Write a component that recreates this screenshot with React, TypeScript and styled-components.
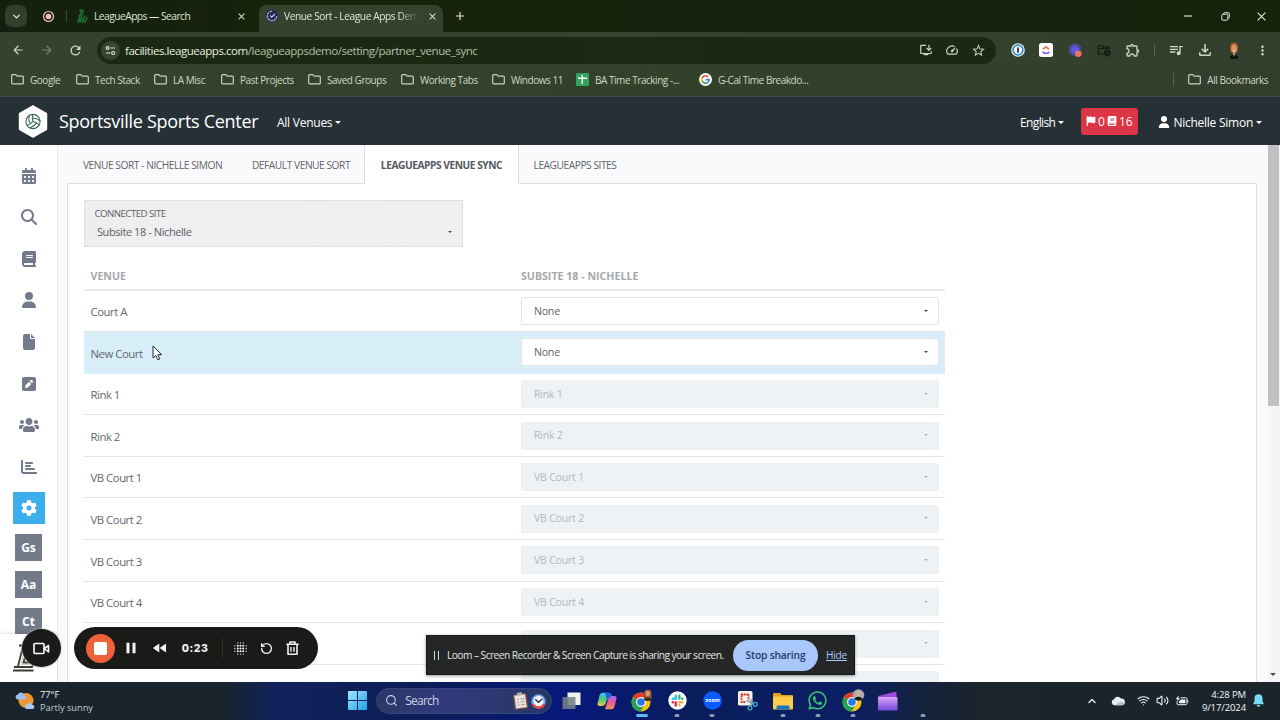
import React from 'react';
import styled, { createGlobalStyle, css } from 'styled-components';
import { FaCalendarDays, FaMagnifyingGlass, FaBook, FaUser, FaFile, FaSquarePen, FaChartBar, FaGear, FaFlag, FaWhatsapp } from 'react-icons/fa6';
import { FaUsers } from 'react-icons/fa';
import { MdArrowBack, MdArrowForward, MdRefresh, MdInstallDesktop, MdOutlineSpeed, MdStarBorder, MdOutlineExtension, MdQueueMusic, MdOutlineFileDownload, MdMoreVert, MdClose, MdAdd, MdFastRewind, MdPause } from 'react-icons/md';
import { Volleyball, Volume2, Wifi, ChevronUp, ChevronDown, Search, RotateCcw } from 'lucide-react';

const GlobalStyle = createGlobalStyle`
  * { box-sizing: border-box; }
  body { margin: 0; overflow: hidden; background: #fff; font-family: "Open Sans", "Noto Sans", sans-serif; }
  svg { display: block; flex: none; }
`;

const Screen = styled.div`
  position: relative;
  width: 1280px;
  height: 720px;
  display: flex;
  flex-direction: column;
  overflow: hidden;
`;

/* ---------- Browser chrome ---------- */

const TabStrip = styled.div`
  height: 32px;
  display: flex;
  align-items: center;
  background: linear-gradient(90deg, #14200f, #172409 30%, #16230e 60%, #15230b);
  color: #dfe5d8;
  font-size: 10.2px;
`;

const TabSearch = styled.div`
  width: 22px;
  height: 22px;
  margin-left: 5px;
  border-radius: 7px;
  background: #30402a;
  display: grid;
  place-items: center;
`;

const PinnedTab = styled.div`
  width: 39px;
  display: flex;
  justify-content: center;
  padding-left: 3px;
`;

const TabDivider = styled.div`
  width: 1px;
  height: 12px;
  background: #3a4a33;
`;

const BrowserTab = styled.div<{ $active?: boolean }>`
  height: 27px;
  align-self: flex-end;
  display: flex;
  align-items: center;
  ${({ $active }) =>
    $active
      ? css`
          width: 184px;
          padding: 0 5px 5px 7px;
          background: #34432d;
          border-radius: 8px 8px 0 0;
        `
      : css`
          width: 192px;
          padding: 0 12px 5px 9px;
        `}
`;

const TabTitle = styled.span<{ $fade?: boolean }>`
  flex: 1;
  margin-left: 6px;
  overflow: hidden;
  white-space: nowrap;
  letter-spacing: -0.5px;
  ${({ $fade }) => $fade && css`mask-image: linear-gradient(90deg, #000 85%, transparent); margin-right: 8px; letter-spacing: -0.42px;`}
`;

const NewTab = styled.div`
  margin-left: 10px;
`;

const WindowControls = styled.div`
  margin-left: auto;
  width: 110px;
  display: flex;
  & > div { width: 36.8px; display: grid; place-items: center; }
`;

const Toolbar = styled.div`
  height: 33px;
  display: flex;
  align-items: center;
  padding-top: 3px;
  background: linear-gradient(90deg, #34432d, #34432c 50%, #323f2d);
  color: #cdd6c5;
`;

const Slot = styled.div<{ $w: number; $dim?: boolean }>`
  width: ${({ $w }) => $w}px;
  flex: none;
  display: grid;
  place-items: center;
  opacity: ${({ $dim }) => ($dim ? 0.45 : 1)};
`;

const AddressBar = styled.div`
  width: 899px;
  height: 27px;
  margin-left: 5px;
  border-radius: 14px;
  background: linear-gradient(90deg, #1b2812, #1b2a13 60%, #1b2914);
  display: flex;
  align-items: center;
  padding: 0 5px 0 4px;
`;

const SiteInfo = styled.div`
  width: 19px;
  height: 19px;
  border-radius: 50%;
  background: #36452f;
  display: grid;
  place-items: center;
`;

const Url = styled.div`
  flex: 1;
  margin-left: 5px;
  font-size: 11.5px;
  letter-spacing: -0.45px;
  color: #b3bfa9;
  b { font-weight: 400; color: #e8eee2; }
`;

const Extensions = styled.div`
  display: flex;
  align-items: center;
  padding-left: 7.5px;
`;

const ToolDivider = styled.div`
  width: 1px;
  height: 12px;
  margin: 0 7px 0 6px;
  background: #56654d;
`;

const Bookmarks = styled.div`
  height: 32px;
  display: flex;
  align-items: center;
  padding: 0 12px 2px 11px;
  background: linear-gradient(90deg, #34432d, #33412b 55%, #333f2d);
  border-bottom: 1px solid #3e4c43;
  font-size: 10px;
  letter-spacing: -0.46px;
  color: #cfd7c8;
`;

const Bookmark = styled.div<{ $w: number }>`
  width: ${({ $w }) => $w}px;
  flex: none;
  display: flex;
  align-items: center;
  gap: 6px;
  white-space: nowrap;
`;

const AllBookmarks = styled.div`
  margin-left: auto;
  padding-left: 14px;
  border-left: 1px solid #56654d;
  height: 13px;
  display: flex;
  align-items: center;
  gap: 6px;
  white-space: nowrap;
`;

/* ---------- Application ---------- */

const AppHeader = styled.header`
  height: 48px;
  flex: none;
  display: flex;
  align-items: center;
  padding: 0 18px;
  background: #263137;
  color: #fff;
`;

const Brand = styled.div`
  width: 218px;
  margin-left: 11px;
  font-size: 18px;
  letter-spacing: -0.29px;
  white-space: nowrap;
`;

const HeaderMenu = styled.div`
  display: flex;
  align-items: center;
  gap: 3px;
  padding-top: 2px;
  font-size: 12px;
  letter-spacing: -0.25px;
  white-space: nowrap;
`;

const LanguageMenu = styled(HeaderMenu)`
  letter-spacing: -0.6px;
`;

const Caret = styled.i<{ $c?: string; $s?: number }>`
  width: 0;
  height: 0;
  border: ${({ $s = 3 }) => $s}px solid transparent;
  border-top-color: ${({ $c = '#fff' }) => $c};
  border-bottom: 0;
`;

const Account = styled.div`
  margin-left: auto;
  display: flex;
  align-items: center;
`;

const Alerts = styled.div`
  width: 57px;
  height: 27px;
  margin: 0 20px 0 17px;
  padding-right: 1px;
  border-radius: 3px;
  background: #dc3546;
  display: flex;
  align-items: center;
  justify-content: center;
  gap: 2px;
  font-size: 12px;
`;

const Body = styled.div`
  height: 536.5px;
  flex: none;
  display: flex;
  overflow: hidden;
  background: #fafafc;
`;

const Sidebar = styled.nav`
  width: 58px;
  flex: none;
  display: flex;
  flex-direction: column;
  align-items: center;
  padding-top: 14.6px;
  background: #fff;
  border-right: 1px solid #e9e9ec;
  color: #737a8b;
`;

const NavItem = styled.div<{ $active?: boolean }>`
  width: 32px;
  height: 32px;
  margin-bottom: 9.6px;
  flex: none;
  display: grid;
  place-items: center;
  ${({ $active }) => $active && css`background: #3daeed; color: #fff;`}
`;

const NavBadge = styled.div`
  width: 27px;
  height: 27px;
  margin-bottom: 10px;
  flex: none;
  display: grid;
  place-items: center;
  background: #737b8b;
  color: #fff;
  font-size: 12px;
  font-weight: 700;
`;

const Main = styled.main`
  flex: 1;
  display: flex;
  flex-direction: column;
  padding: 0 11px 0 9px;
`;

const PageTabs = styled.div`
  height: 39px;
  flex: none;
  display: flex;
  margin-bottom: -1px;
`;

const PageTab = styled.div<{ $w: number; $active?: boolean }>`
  position: relative;
  width: ${({ $w }) => $w}px;
  padding-top: 12px;
  text-align: center;
  white-space: nowrap;
  font-size: 10.2px;
  line-height: 16px;
  letter-spacing: -0.45px;
  color: #62656a;
  ${({ $active }) =>
    $active &&
    css`
      font-weight: 700;
      color: #55585c;
      background: #fff;
      border: solid #dedee2;
      border-width: 0 1px;
    `}
`;

const Panel = styled.section`
  flex: 1;
  padding: 16px;
  background: #fff;
  border: 1px solid #dedfe2;
  border-bottom: 0;
`;

const SiteSelect = styled.div`
  width: 379px;
  height: 47px;
  padding: 5px 10px;
  background: linear-gradient(90deg, #efeeef, #efeef1 50%, #f0f0ee);
  border: 1px solid #dedfe3;
  color: #5c5f64;
`;

const SiteLabel = styled.div`
  font-size: 9.7px;
  line-height: 16px;
  letter-spacing: -0.55px;
  font-weight: 500;
  margin-left: -0.5px;
`;

const SiteValue = styled.div`
  display: flex;
  align-items: center;
  justify-content: space-between;
  padding-left: 2px;
  font-size: 11px;
  line-height: 20px;
  letter-spacing: -0.42px;
`;

const Table = styled.div`
  width: 861px;
  margin-top: 16px;
`;

const HeadRow = styled.div`
  height: 27.5px;
  display: grid;
  grid-template-columns: 430.5px 1fr;
  align-items: center;
  padding-left: 6.5px;
  border-bottom: 2px solid #e9eaeb;
  color: #a5a7a9;
  font-size: 10.6px;
  font-weight: 700;
  letter-spacing: 0.02px;
`;

const Row = styled.div<{ $hover?: boolean }>`
  height: 41.6px;
  display: grid;
  grid-template-columns: 430.5px 417.5px;
  align-items: center;
  padding-left: 6.5px;
  border-bottom: 1px solid ${({ $hover }) => ($hover ? '#d8eef9' : '#e4e5e6')};
  background: ${({ $hover }) => ($hover ? '#d8eef9' : 'transparent')};
  font-size: 11.4px;
  letter-spacing: -0.5px;
  color: #66696d;
`;

const VenueName = styled.span`
  padding-top: 1.6px;
`;

const VenueSelect = styled.div<{ $disabled?: boolean }>`
  height: 28px;
  display: flex;
  align-items: center;
  justify-content: space-between;
  padding: 0 9.5px 0.6px 12px;
  border: 1px solid ${({ $disabled }) => ($disabled ? '#edf0f1' : '#e3e4e6')};
  border-radius: 2px;
  background: ${({ $disabled }) => ($disabled ? '#eef2f4' : '#fff')};
  color: ${({ $disabled }) => ($disabled ? '#b3b9bd' : '#606367')};
  font-size: 10.6px;
  letter-spacing: -0.24px;
`;

const Scrollbar = styled.div`
  width: 12px;
  display: flex;
  flex-direction: column;
  justify-content: space-between;
  padding-bottom: 6px;
  background: #f5f5f8;
`;

const Thumb = styled.div`
  width: 11px;
  height: 261px;
  background: #c1c1c3;
`;

const ScrollDown = styled.div`
  display: flex;
  padding-left: 2px;
`;

/* ---------- Windows taskbar ---------- */

const Taskbar = styled.footer`
  flex: 1;
  display: flex;
  align-items: center;
  background: linear-gradient(90deg, #1a242c 0, #1a242c 225px, #10235a 275px, #0d1e57 420px, #06187a 560px, #0a1d5c 700px, #0b1f63 850px, #14223e 920px, #1b252c 980px, #1b242a);
  color: #f2f5f7;
`;

const Weather = styled.div`
  width: 340px;
  display: flex;
  align-items: center;
  gap: 5px;
  padding-left: 15px;
  font-size: 9.3px;
  line-height: 13px;
  letter-spacing: -0.05px;
  div > div:last-child { color: #c6ced3; }
`;

const SearchBox = styled.div`
  width: 176px;
  height: 26px;
  margin: 0 1px;
  padding: 0 4px 0 8px;
  border-radius: 13px;
  background: linear-gradient(90deg, #2a3868, #313a7c 40%, #263766);
  border: 1px solid #36457a;
  display: flex;
  align-items: center;
  font-size: 12px;
  color: #cdd4e4;
  span { flex: 1; margin-left: 7px; letter-spacing: -0.75px; }
`;

const TaskIcon = styled.div<{ $mark?: 'dot' | 'bar' }>`
  position: relative;
  width: 35.2px;
  height: 38px;
  display: grid;
  place-items: center;
  &::after {
    content: '';
    position: absolute;
    bottom: 3px;
    left: 50%;
    transform: translateX(-50%);
    height: 2.5px;
    border-radius: 2px;
    width: ${({ $mark }) => ($mark === 'bar' ? 12 : $mark ? 5 : 0)}px;
    background: ${({ $mark }) => ($mark === 'bar' ? '#5cb8f3' : '#8e9bb5')};
  }
`;

const TaskIcons = styled.div`
  display: flex;
  padding-left: 0.7px;
`;

const Tray = styled.div`
  margin-left: auto;
  display: flex;
  align-items: center;
  padding-right: 16px;
`;

const Clock = styled.div`
  width: 52px;
  text-align: right;
  font-size: 9.5px;
  line-height: 13px;
  letter-spacing: -0.1px;
  margin-right: 7px;
`;

/* ---------- Floating recorder parts ---------- */

const CornerCard = styled.div`
  position: absolute;
  left: 0;
  top: 634px;
  width: 57px;
  height: 47.5px;
  background: #fff;
  box-shadow: 0 -1px 3px rgba(0, 0, 0, 0.12);
  display: flex;
  align-items: center;
  padding: 1px 0 0 13px;
`;

const CameraButton = styled.div`
  position: absolute;
  left: 22px;
  top: 629px;
  width: 39px;
  height: 38px;
  border-radius: 50%;
  background: #1b1b1a;
  box-shadow: 0 0 0 1px rgba(190, 190, 190, 0.5);
  display: grid;
  place-items: center;
`;

const Recorder = styled.div`
  position: absolute;
  left: 74px;
  top: 627px;
  width: 244px;
  height: 42px;
  border-radius: 21px;
  background: #1a1b18;
  color: #f2f2f0;
  display: flex;
  align-items: center;
  padding-left: 12px;
`;

const StopButton = styled.div`
  width: 29px;
  height: 29px;
  border-radius: 50%;
  background: #ee6239;
  display: grid;
  place-items: center;
  &::after { content: ''; width: 13px; height: 13px; border-radius: 2px; background: #fff; }
`;

const Timer = styled.div`
  width: 38px;
  margin-left: 4px;
  text-align: center;
  font: 800 10.5px Inter, sans-serif;
  letter-spacing: 0.5px;
`;

const RecorderDivider = styled.div`
  width: 1px;
  height: 20px;
  margin-left: 8px;
  background: #30302d;
`;

const ShareBar = styled.div`
  position: absolute;
  left: 426px;
  top: 635px;
  width: 429px;
  height: 40px;
  display: flex;
  align-items: center;
  padding-left: 7px;
  background: #252626;
  border: 1px solid #171818;
  box-shadow: 0 1px 3px rgba(0, 0, 0, 0.4);
  color: #e4e5e6;
  font-size: 10.2px;
  white-space: nowrap;
`;

const PauseMark = styled.i`
  width: 5px;
  height: 9px;
  border: solid #d5d6d7;
  border-width: 0 1.5px;
`;

const ShareText = styled.span`
  width: 286px;
  margin-left: 8px;
  letter-spacing: -0.54px;
`;

const StopSharing = styled.button`
  width: 85px;
  height: 31px;
  padding: 0;
  border: 0;
  border-radius: 16px;
  background: #a8c7fa;
  color: #1f3a68;
  font: 600 10.3px "Open Sans", sans-serif;
  letter-spacing: -0.2px;
`;

const HideLink = styled.a`
  margin-left: 8px;
  color: #a8c7fa;
  text-decoration: underline;
  letter-spacing: -0.3px;
`;

const Pointer = styled.svg`
  position: absolute;
  left: 152px;
  top: 345px;
`;

/* ---------- Drawings ---------- */

const Folder = () => (
  <svg width="13" height="11" viewBox="0 0 13 11" fill="none" stroke="#c8d2bf" strokeWidth="1.2">
    <path d="M.7 1.6a.9.9 0 0 1 .9-.9h3.2l1.4 1.5h5.2a.9.9 0 0 1 .9.9v5.9a.9.9 0 0 1-.9.9H1.6a.9.9 0 0 1-.9-.9z" />
  </svg>
);

const RecordIcon = () => (
  <svg width="13" height="13" viewBox="0 0 13 13"><circle cx="6.5" cy="6.5" r="5" fill="none" stroke="#f0c3bb" strokeWidth="1.2" /><circle cx="6.5" cy="6.5" r="2.8" fill="#f7bdb2" /></svg>
);

const LeagueMark = () => (
  <svg width="12" height="14" viewBox="0 0 12 14" fill="none" stroke="#1d7a35" strokeWidth="1.3">
    <path d="M3 1.2h4.5M5.3 1.5 2.6 10.5M7.4 1.5 4.9 9.2h3l1.2-2.6M.8 12.9h8.6l1.9-5M1.5 11h7.2" />
  </svg>
);

const CornerMark = () => (
  <svg width="24" height="28" viewBox="0 0 24 28" fill="none">
    <path d="M6 1.5h9M10 2 5 22.5M15 2l-4.500 16.500h6l3-5M1 23h18l3.500-9" stroke="#3c3b36" strokeWidth="1.8" />
    <path d="M7.500 3.500h2M12.500 3 8 20.500h10.500" stroke="#d8cdb6" strokeWidth="1" />
    <path d="M0 26.500h20.500" stroke="#3c3b36" strokeWidth="2" />
  </svg>
);

const CheckFavicon = () => (
  <svg width="12" height="12" viewBox="0 0 12 12" fill="none"><circle cx="6" cy="6" r="6" fill="#252a52" /><path d="M6 1.3A4.7 4.7 0 1 0 10.7 6" stroke="#b9bee6" strokeWidth="1.1" strokeDasharray="2.6 .6" /><path d="m4.2 5.6 1.6 1.6 3-3.2" stroke="#ccd0f2" strokeWidth="1.1" /></svg>
);

const TuneIcon = () => (
  <svg width="11" height="11" viewBox="0 0 11 11" fill="none" stroke="#dbe3d4" strokeWidth="1.2"><circle cx="2.6" cy="3" r="1.4" /><path d="M5.4 3H10M1 8h4.4" /><circle cx="8.2" cy="8" r="1.5" /></svg>
);

const SheetsIcon = () => (
  <svg width="13" height="13" viewBox="0 0 13 13"><rect width="13" height="13" rx="1" fill="#31a45c" /><path d="M6.2 2v9M2 5.3h9" stroke="#fff" strokeWidth="1.4" /></svg>
);

const GoogleIcon = () => (
  <svg width="13" height="13" viewBox="0 0 13 13" fill="none" strokeWidth="1.7"><circle cx="6.5" cy="6.5" r="6.5" fill="#fff" /><path d="M9.3 4A3.7 3.7 0 0 0 3.2 4.8" stroke="#ea4335" /><path d="M3.2 4.8a3.7 3.7 0 0 0 0 3.4" stroke="#fbbc05" /><path d="M3.2 8.2a3.7 3.7 0 0 0 5.6 1.2" stroke="#34a853" /><path d="M8.8 9.4a3.7 3.7 0 0 0 1.4-2.8H6.6" stroke="#4285f4" /></svg>
);

const OnePassword = () => (
  <svg width="14" height="14" viewBox="0 0 14 14"><circle cx="7" cy="7" r="6.8" fill="#eef4fa" /><circle cx="7" cy="7" r="4.9" fill="none" stroke="#2d7fc6" strokeWidth="1.5" /><rect x="6.1" y="4.2" width="1.8" height="5.6" rx=".6" fill="#1a3854" /></svg>
);

const ClickUp = () => (
  <svg width="14" height="14" viewBox="0 0 14 14" fill="none"><rect width="14" height="14" rx="2.5" fill="#fff" /><path d="M4 6.2 7 3.8l3 2.4" stroke="#e8784f" strokeWidth="1.8" /><path d="M3.6 8.8c2 2.2 4.8 2.2 6.8 0" stroke="#8a63ee" strokeWidth="1.8" /></svg>
);

const LoomIcon = () => (
  <svg width="15" height="15" viewBox="0 0 15 15"><g stroke="#5d59e8" strokeWidth="1.1" strokeLinecap="round"><path d="M7 .8v12M1 6.800h12M2.800 2.600l8.400 8.400M11.200 2.600 2.800 11M4.700 1.300l4.600 11M9.300 1.300l-4.600 11M1.500 4.500l11 4.600M12.500 4.500l-11 4.600" /></g><circle cx="7" cy="6.8" r="3" fill="#5d59e8" /><circle cx="10.3" cy="10.7" r="3.3" fill="#f0715f" /></svg>
);

const FolderClock = () => (
  <svg width="14" height="13" viewBox="0 0 14 13" fill="none" stroke="#141c11" strokeWidth="1.2"><path d="M12 5V3.2H6.5L5.2 1.5H1.2v8.7H7" /><path d="M1.2 4.4H12" /><circle cx="10.3" cy="9" r="2.8" fill="#1d271a" /></svg>
);

const Avatar = () => (
  <svg width="12" height="17" viewBox="0 0 12 17"><path d="M1.5 15q4.500-5 9 0L9 17H3z" fill="#15120e" /><path d="M2 5q0-4.500 4-4.500T10 5l-.5 5h-7z" fill="#a3552b" /><ellipse cx="6.1" cy="6.8" rx="2.8" ry="4.2" fill="#d9935f" /><path d="M4.5 10.500h3.200L6 15z" fill="#c68560" /><path d="M4.900 8.600q1.200.8 2.400 0" stroke="#fff" strokeWidth=".7" fill="none" /></svg>
);

const MinimizeIcon = () => (
  <svg width="8" height="2" viewBox="0 0 8 2"><path d="M0 1h8" stroke="#fff" /></svg>
);

const RestoreIcon = () => (
  <svg width="9" height="9" viewBox="0 0 9 9" fill="none" stroke="#e6eae2" strokeWidth="1"><rect x=".8" y="2.2" width="6" height="6" rx="1.2" /><path d="M2.6 2.2V1.6a.9.9 0 0 1 .9-.9h3.600a1.200 1.200 0 0 1 1.200 1.200v3.600a.9.9 0 0 1-.9.9" /></svg>
);

const CloseIcon = () => (
  <svg width="9" height="9" viewBox="0 0 9 9"><path d="m.6.6 7.800 7.800M8.400.6.6 8.400" stroke="#e6eae2" strokeWidth="1.1" /></svg>
);

const HexLogo = () => (
  <svg width="30" height="33" viewBox="0 0 30 33"><path d="M15 .8 28.600 8.400v16.200L15 32.200 1.400 24.600V8.400z" fill="#fff" stroke="#fff" strokeWidth="1.2" strokeLinejoin="round" /><Volleyball x={6.5} y={8} width={17} height={17} color="#41695a" strokeWidth={1.6} /></svg>
);

const WeatherIcon = () => (
  <svg width="20" height="19" viewBox="0 0 20 19"><circle cx="11" cy="9.5" r="7.5" fill="#f1952e" /><path d="M2.500 8.500a2.600 2.600 0 0 1 .4-5.100 3.300 3.300 0 0 1 6.200.7 2.200 2.200 0 0 1 .2 4.400z" fill="#9fc0ee" /><path d="M11.500 18a2.400 2.400 0 0 1 0-4.600 3 3 0 0 1 5.500.5 2 2 0 0 1 .6 4.100z" fill="#a9c9f4" /></svg>
);

const WindowsLogo = () => (
  <svg width="19" height="19" viewBox="0 0 19 19"><defs><linearGradient id="win" x1="0" y1="0" x2="1" y2="1"><stop stopColor="#a6e5fa" /><stop offset="1" stopColor="#1ba1ec" /></linearGradient></defs><path d="M0 1a1 1 0 0 1 1-1h8v9H0zM10 0h8a1 1 0 0 1 1 1v8h-9zM0 10h9v9H1a1 1 0 0 1-1-1zM10 10h9v8a1 1 0 0 1-1 1h-8z" fill="url(#win)" /></svg>
);

const SearchArt = () => (
  <svg width="35" height="20" viewBox="0 0 35 20"><g transform="rotate(-8 8 10)"><rect x="2" y="3" width="13" height="15" rx="1" fill="#9c5a46" /><rect x="3.2" y="4" width="10.6" height="13" fill="#e9e5e1" /><path d="M5 8h2M8.500 8h4M5 11h2M8.500 11h4M5 14h2M8.500 14h4" stroke="#a5988f" strokeWidth="1" /><rect x="5.8" y="1.5" width="5.4" height="3" rx="1" fill="#a7afb8" /></g><circle cx="26.5" cy="10.5" r="7.2" fill="#6fa6ea" /><path d="M19.700 13a7.200 7.200 0 0 0 13.600 0z" fill="#d94c45" /><circle cx="26.5" cy="10" r="5.200" fill="#eef3fa" /><path d="m23.200 8.300 3.300 3 4-3.600" fill="none" stroke="#273757" strokeWidth="1.5" /></svg>
);

const TaskView = () => (
  <svg width="19" height="18" viewBox="0 0 19 18"><rect x="5.5" y=".5" width="13" height="12.5" fill="#f0f1f1" /><rect x=".5" y="5" width="13" height="12" fill="#777f86" opacity=".88" /></svg>
);

const Copilot = () => (
  <svg width="20" height="18" viewBox="0 0 20 18"><defs><linearGradient id="cpA" x1="0" y1="0" x2="0" y2="1"><stop stopColor="#36c3f2" /><stop offset=".5" stopColor="#4ec77c" /><stop offset="1" stopColor="#f5c543" /></linearGradient><linearGradient id="cpB" x1="0" y1="0" x2="0" y2="1"><stop stopColor="#9d6df0" /><stop offset=".5" stopColor="#ec5a93" /><stop offset="1" stopColor="#f6914f" /></linearGradient></defs><path d="M5.500.7H12L8.600 11.600Q7.800 14 5.200 14H2.600Q-.1 14 .6 11.200L2.600 3.300Q3.300.7 5.500.7z" fill="url(#cpA)" /><path d="M14.500 17.300H8L11.400 6.400Q12.200 4 14.800 4h2.600q2.700 0 2 2.800l-2 7.900q-.7 2.600-2.900 2.600z" fill="url(#cpB)" /><path d="M8.500.7h4q1.500 0 2 2l.4 1.300h-.3Q12.200 4 11.400 6.400L10.600 9 8.600 3.400z" fill="#2564d8" /></svg>
);

const Chrome = ({ badge }: { badge: 'warm' | 'grey' }) => (
  <svg width="24" height="25" viewBox="0 0 24 25">
    <circle cx="11" cy="14" r="9.5" fill="#fbc116" />
    <path d="M11 14 2.800 9.250A9.500 9.500 0 0 1 19.200 9.250z" fill="#e33b2e" />
    <path d="M11 14 2.800 9.250A9.500 9.500 0 0 0 10.500 23.500L15 16.300z" fill="#23a455" />
    <circle cx="11" cy="14" r="4.9" fill="#fff" /><circle cx="11" cy="14" r="3.8" fill="#2c77e5" />
    {badge === 'warm' ? (
      <>
        <path d="M14 5q0-3.500 3.800-3.500T21.500 5v6.500q-4 2-7.500 0z" fill="#8d5a35" />
        <ellipse cx="17.8" cy="5.6" rx="2.2" ry="2.9" fill="#d89a6c" />
        <path d="M14 12q0-2.500 3.800-2.500t3.700 2.500q-4 2-7.500 0z" fill="#3a2a20" />
      </>
    ) : (
      <>
        <circle cx="17.5" cy="7" r="5.8" fill="#a9abae" />
        <ellipse cx="17.5" cy="5.5" rx="2.3" ry="3" fill="#cdb0a0" />
        <path d="M13.200 11q4.300-4.600 8.600 0-4.300 3.400-8.600 0z" fill="#15171b" />
      </>
    )}
  </svg>
);

const Slack = () => (
  <svg width="19" height="19" viewBox="0 0 19 19"><circle cx="9.5" cy="9.5" r="9.2" fill="#fff" /><g strokeWidth="2.4" strokeLinecap="round"><path d="M7.800 4.700v3M4.600 7.700h2.600" stroke="#36c5f0" /><path d="M11.400 4.600v3M14.400 7.800h-.2" stroke="#2eb67d" /><path d="M11.300 11.200h3M11.400 14.300v-.2" stroke="#ecb22e" /><path d="M7.700 11.400v3M4.700 11.300h.2" stroke="#e01e5a" /></g></svg>
);

const ZoomIcon = () => (
  <svg width="19" height="19" viewBox="0 0 19 19"><circle cx="9.5" cy="9.5" r="9.3" fill="#0b5cff" /><text x="9.5" y="11.4" textAnchor="middle" fontSize="5.400" fontWeight="700" fontFamily="Inter, sans-serif" fill="#fff">zoom</text></svg>
);

const Snip = () => (
  <svg width="21" height="21" viewBox="0 0 21 21" fill="none"><rect x="1" y="1" width="14.5" height="14.5" rx="1.5" fill="#f4f1ef" /><path d="M11.500 4.500H4.500v7.500h4" stroke="#c9402e" strokeWidth="1.800" strokeDasharray="2 .7" /><path d="M11.500 4.500v5" stroke="#c9402e" strokeWidth="1.800" strokeDasharray="2 .7" /><path d="m9.500 10.500 7 3.300M13.800 16l.2-7" stroke="#8d9aa4" strokeWidth="1.500" /><circle cx="18.300" cy="14.300" r="1.900" stroke="#37a3c9" strokeWidth="1.400" /><circle cx="13" cy="18" r="1.900" stroke="#37a3c9" strokeWidth="1.400" /></svg>
);

const Explorer = () => (
  <svg width="20" height="18" viewBox="0 0 20 18"><path d="M0 2a1 1 0 0 1 1-1h6l2 2h10a1 1 0 0 1 1 1v4H0z" fill="#e7a01f" /><rect y="4.5" width="20" height="13" rx="1" fill="#fbcd4a" /><path d="M3.500 17.500V15a1.500 1.500 0 0 1 1.500-1.500h10a1.500 1.500 0 0 1 1.500 1.500v2.500z" fill="#1b76b9" /></svg>
);

const Clipchamp = () => (
  <svg width="20" height="20" viewBox="0 0 20 20"><defs><linearGradient id="clip" x1="0" y1="0" x2="0" y2="1"><stop stopColor="#d7a5f5" /><stop offset="1" stopColor="#7746e0" /></linearGradient></defs><path d="m0 5 18.500-4.500V6H0z" fill="#9a4bdc" /><rect y="6" width="19.5" height="13.5" rx="1" fill="url(#clip)" /></svg>
);

const CloudIcon = () => (
  <svg width="14" height="10" viewBox="0 0 14 10"><path d="M3.500 9.200A3 3 0 0 1 3 3.300 4 4 0 0 1 10 2.600a3.300 3.300 0 0 1 1 6.600z" fill="#e9edf0" /><path d="M3.500 9.200 10 5.600l3.500 2a3.300 3.300 0 0 1-2.500 1.600z" fill="#b3bcc2" /></svg>
);

const BatteryIcon = () => (
  <svg width="14" height="11" viewBox="0 0 14 11" fill="none" stroke="#f2f5f7"><path d="M5.500 2.800h5.300a1.200 1.200 0 0 1 1.200 1.200v4.500a1.200 1.200 0 0 1-1.200 1.200H3.200A1.200 1.200 0 0 1 2 8.500V6.500" strokeWidth="1" /><path d="M4 8.200V6.500l2-2h4.400v3.700zM12.300 5h.9v2.500h-.9z" fill="#f2f5f7" stroke="none" /><path d="M3.600.3.8 4.300h1.900L2 7l3-3.800H3.300z" fill="#f2f5f7" stroke="none" /></svg>
);

const Bell = () => (
  <svg width="11" height="13" viewBox="0 0 11 13" fill="#79dcf4"><path d="M5.500.3A4 4 0 0 0 1.500 4.300v3L.3 9.600v.7h10.400v-.7L9.500 7.300v-3a4 4 0 0 0-4-4zM3.700 11h3.600a1.800 1.800 0 0 1-3.600 0z" /></svg>
);

const CameraIcon = () => (
  <svg width="17" height="13" viewBox="0 0 17 13" fill="none" stroke="#fff" strokeWidth="1.6" strokeLinejoin="round"><rect x="1" y="1.5" width="10" height="10" rx="1" /><path d="m11.500 6.500 4-3v6.500z" /></svg>
);

const TrashIcon = () => (
  <svg width="13" height="15" viewBox="0 0 13 15" fill="none" stroke="#f2f2f0" strokeWidth="1.6" strokeLinejoin="round"><path d="M.3 3.300h12.400M4 3V1h5v2M2 3.500v9.700h9V3.500" /><path d="M5 6v4.800M8 6v4.800" strokeWidth="1.4" /></svg>
);

const EffectsIcon = () => (
  <svg width="15" height="15" viewBox="0 0 15 15" fill="#f2f2f0">
    {[4.8, 7.5, 10.2].map((x) => [4.8, 7.5, 10.2].map((y) => <circle key={`${x}-${y}`} cx={x} cy={y} r="1.05" />))}
    {[4.8, 7.5, 10.2].map((n) => (
      <React.Fragment key={n}><circle cx={n} cy="1.9" r=".65" /><circle cx={n} cy="13.1" r=".65" /><circle cx="1.8" cy={n} r=".65" /><circle cx="13.2" cy={n} r=".65" /></React.Fragment>
    ))}
  </svg>
);

/* ---------- Data ---------- */

const folders: [string, number][] = [
  ['Google', 65], ['Tech Stack', 78], ['LA Misc', 67], ['Past Projects', 87], ['Saved Groups', 93], ['Working Tabs', 91], ['Windows 11', 84],
];

type Venue = { name: string; value: string; hover?: boolean; linked?: boolean };

const linkedVenues = ['Rink 1', 'Rink 2', 'VB Court 1', 'VB Court 2', 'VB Court 3', 'VB Court 4', 'VB Court 5'];

const venues: Venue[] = [
  { name: 'Court A', value: 'None' },
  { name: 'New Court', value: 'None', hover: true },
  ...linkedVenues.map((name) => ({ name, value: name, linked: true })),
  { name: '', value: '', linked: true },
];

const navIcons = [FaCalendarDays, FaMagnifyingGlass, FaBook, FaUser, FaFile, FaSquarePen, FaUsers, FaChartBar, FaGear];

export default function App() {
  return (
    <Screen>
      <GlobalStyle />

      <TabStrip>
        <TabSearch><ChevronDown size={11} strokeWidth={3} /></TabSearch>
        <PinnedTab><RecordIcon /></PinnedTab>
        <TabDivider />
        <BrowserTab>
          <LeagueMark />
          <TabTitle>LeagueApps — Search</TabTitle>
          <MdClose size={11} />
        </BrowserTab>
        <BrowserTab $active>
          <CheckFavicon />
          <TabTitle $fade>Venue Sort - League Apps Dem</TabTitle>
          <MdClose size={11} />
        </BrowserTab>
        <NewTab><MdAdd size={14} /></NewTab>
        <WindowControls>
          <div><MinimizeIcon /></div>
          <div><RestoreIcon /></div>
          <div><CloseIcon /></div>
        </WindowControls>
      </TabStrip>

      <Toolbar>
        <Slot $w={35}><MdArrowBack size={14} /></Slot>
        <Slot $w={23} $dim><MdArrowForward size={14} /></Slot>
        <Slot $w={34}><MdRefresh size={15} /></Slot>
        <AddressBar>
          <SiteInfo><TuneIcon /></SiteInfo>
          <Url><b>facilities.leagueapps.com</b>/leagueappsdemo/setting/partner_venue_sync</Url>
          <Slot $w={26}><MdInstallDesktop size={14} /></Slot>
          <Slot $w={26}><MdOutlineSpeed size={14} /></Slot>
          <Slot $w={26}><MdStarBorder size={15} /></Slot>
        </AddressBar>
        <Extensions>
          <Slot $w={28}><OnePassword /></Slot>
          <Slot $w={29}><ClickUp /></Slot>
          <Slot $w={29}><LoomIcon /></Slot>
          <Slot $w={29}><FolderClock /></Slot>
          <Slot $w={29}><MdOutlineExtension size={16} /></Slot>
          <ToolDivider />
          <Slot $w={29}><MdQueueMusic size={16} /></Slot>
          <Slot $w={29}><MdOutlineFileDownload size={18} /></Slot>
          <Slot $w={29}><Avatar /></Slot>
          <Slot $w={28}><MdMoreVert size={15} /></Slot>
        </Extensions>
      </Toolbar>

      <Bookmarks>
        {folders.map(([name, width]) => (
          <Bookmark key={name} $w={width}><Folder />{name}</Bookmark>
        ))}
        <Bookmark $w={123}><SheetsIcon />BA Time Tracking -...</Bookmark>
        <Bookmark $w={120}><GoogleIcon />G-Cal Time Breakdo...</Bookmark>
        <AllBookmarks><Folder />All Bookmarks</AllBookmarks>
      </Bookmarks>

      <AppHeader>
        <HexLogo />
        <Brand>Sportsville Sports Center</Brand>
        <HeaderMenu>All Venues<Caret /></HeaderMenu>
        <Account>
          <LanguageMenu>English<Caret /></LanguageMenu>
          <Alerts><FaFlag size={10} />0<FaBook size={10} /> 16</Alerts>
          <HeaderMenu><FaUser size={12} />Nichelle Simon<Caret /></HeaderMenu>
        </Account>
      </AppHeader>

      <Body>
        <Sidebar>
          {navIcons.map((Icon, i) => (
            <NavItem key={i} $active={Icon === FaGear}><Icon size={Icon === FaUsers ? 20 : 16} /></NavItem>
          ))}
          <NavBadge>Gs</NavBadge>
          <NavBadge>Aa</NavBadge>
          <NavBadge>Ct</NavBadge>
        </Sidebar>
        <Main>
          <PageTabs>
            <PageTab $w={171}>VENUE SORT - NICHELLE SIMON</PageTab>
            <PageTab $w={126}>DEFAULT VENUE SORT</PageTab>
            <PageTab $w={155} $active>LEAGUEAPPS VENUE SYNC</PageTab>
            <PageTab $w={112}>LEAGUEAPPS SITES</PageTab>
          </PageTabs>
          <Panel>
            <SiteSelect>
              <SiteLabel>CONNECTED SITE</SiteLabel>
              <SiteValue>Subsite 18 - Nichelle<Caret $c="#4b4e52" $s={2.5} /></SiteValue>
            </SiteSelect>
            <Table>
              <HeadRow><span>VENUE</span><span>SUBSITE 18 - NICHELLE</span></HeadRow>
              {venues.map((v) => (
                <Row key={v.name} $hover={v.hover}>
                  <VenueName>{v.name}</VenueName>
                  <VenueSelect $disabled={v.linked}>{v.value}<Caret $c={v.linked ? '#a9afb2' : '#44474a'} $s={2.5} /></VenueSelect>
                </Row>
              ))}
            </Table>
          </Panel>
        </Main>
        <Scrollbar><Thumb /><ScrollDown><Caret $c="#4d4d50" $s={3} /></ScrollDown></Scrollbar>
      </Body>

      <Taskbar>
        <Weather><WeatherIcon /><div><div>77°F</div><div>Partly sunny</div></div></Weather>
        <TaskIcon><WindowsLogo /></TaskIcon>
        <SearchBox><Search size={13} /><span>Search</span><SearchArt /></SearchBox>
        <TaskIcons>
          <TaskIcon><TaskView /></TaskIcon>
          <TaskIcon><Copilot /></TaskIcon>
          <TaskIcon $mark="bar"><Chrome badge="warm" /></TaskIcon>
          <TaskIcon $mark="dot"><Slack /></TaskIcon>
          <TaskIcon $mark="dot"><ZoomIcon /></TaskIcon>
          <TaskIcon><Snip /></TaskIcon>
          <TaskIcon $mark="dot"><Explorer /></TaskIcon>
          <TaskIcon $mark="dot"><FaWhatsapp size={21} color="#37c871" /></TaskIcon>
          <TaskIcon $mark="dot"><Chrome badge="grey" /></TaskIcon>
          <TaskIcon><Clipchamp /></TaskIcon>
          <TaskIcon $mark="dot" />
        </TaskIcons>
        <Tray>
          <Slot $w={24}><ChevronUp size={12} strokeWidth={2.5} /></Slot>
          <Slot $w={28}><CloudIcon /></Slot>
          <Slot $w={22}><Wifi size={13} /></Slot>
          <Slot $w={16}><Volume2 size={13} /></Slot>
          <Slot $w={24}><BatteryIcon /></Slot>
          <Clock><div>4:28 PM</div><div>9/17/2024</div></Clock>
          <Bell />
        </Tray>
      </Taskbar>

      <CornerCard><CornerMark /></CornerCard>
      <CameraButton><CameraIcon /></CameraButton>
      <Recorder>
        <StopButton />
        <Slot $w={32}><MdPause size={18} /></Slot>
        <Slot $w={25}><MdFastRewind size={18} /></Slot>
        <Timer>0:23</Timer>
        <RecorderDivider />
        <Slot $w={34}><EffectsIcon /></Slot>
        <Slot $w={18}><RotateCcw size={13} strokeWidth={2.5} /></Slot>
        <Slot $w={34}><TrashIcon /></Slot>
      </Recorder>
      <ShareBar>
        <PauseMark />
        <ShareText>Loom – Screen Recorder &amp; Screen Capture is sharing your screen.</ShareText>
        <StopSharing>Stop sharing</StopSharing>
        <HideLink>Hide</HideLink>
      </ShareBar>
      <Pointer width="11" height="16" viewBox="0 0 11 16"><path d="M1 1v12l2.800-2.500 2 4.300 2-.9-2-4.200h3.900z" fill="#fff" stroke="#222b35" strokeWidth="1" /></Pointer>
    </Screen>
  );
}
